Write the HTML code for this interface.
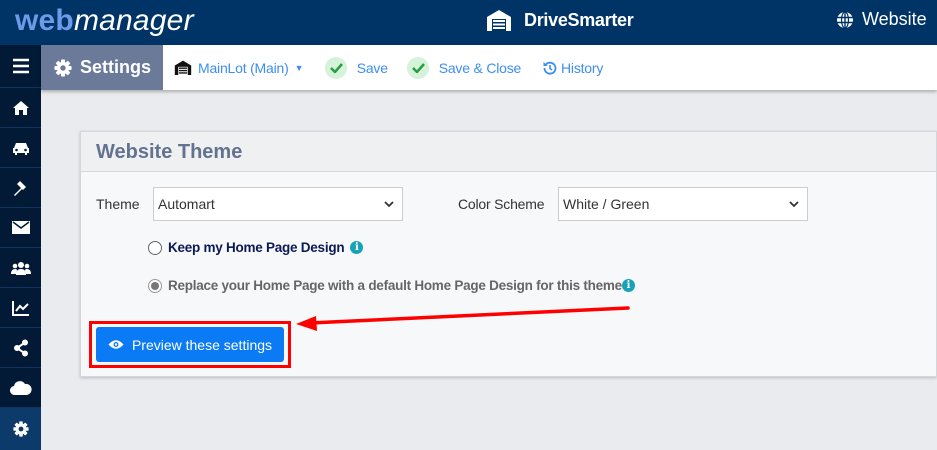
<!DOCTYPE html>
<html><head><style>
*{box-sizing:border-box;margin:0;padding:0}
body{width:937px;height:449px;overflow:hidden;background:#e9ebee;font-family:"Liberation Sans",Arial,sans-serif;position:relative}
.top{position:absolute;left:0;top:0;width:937px;height:45px;background:#003366}
.logo{position:absolute;left:15px;top:4px;font-size:30px;color:#fff;font-style:italic;letter-spacing:0.2px}
.logo b{color:#6e9be8;font-style:normal}
.brand{position:absolute;left:486px;top:9px;color:#fff;font-weight:bold;font-size:18px;display:flex;align-items:center;gap:12px;letter-spacing:-0.3px}
.web{position:absolute;left:836px;top:9px;color:#fff;font-size:18px;display:flex;align-items:center;gap:8px}
.side{position:absolute;left:0;top:45px;width:41px;height:404px;background:#021a35}
.si{height:40px;border-bottom:1px solid #0d335e;display:flex;align-items:center;justify-content:center}
.bar{position:absolute;left:41px;top:45px;width:896px;height:45px;background:#fff;box-shadow:0 2px 3px rgba(0,0,0,.25)}
.tab{position:absolute;left:0;top:0;width:122px;height:45px;background:#6b7a99;color:#fff;font-weight:bold;font-size:18px;display:flex;align-items:center;padding-left:13px;gap:8px}
.ti{position:absolute;top:0;height:45px;display:flex;align-items:center;color:#3d8ef0;font-size:14px;gap:6px;letter-spacing:-0.2px}
.chk{width:22px;height:22px;border-radius:50%;background:#d4f3da;display:flex;align-items:center;justify-content:center}
.panel{position:absolute;left:80px;top:131px;width:857px;height:246px;background:#f7f8fa;border:1px solid #d3d6db;box-shadow:0 1px 3px rgba(0,0,0,.2)}
.ph{height:40px;background:#eef0f2;border-bottom:1px solid #d6d9dd;color:#64728f;font-weight:bold;font-size:20px;padding:9px 15px}
.lbl{position:absolute;font-size:14px;color:#333}
.sel{position:absolute;height:34px;background:#fff;border:1px solid #ccc;font-size:14px;color:#333;padding:8px 4px}
.sel svg{position:absolute;right:8px;top:13px}
.rad{position:absolute;font-size:13.5px;font-weight:bold;display:flex;align-items:center;gap:6px;letter-spacing:-0.25px}
.rc{width:14px;height:14px;border-radius:50%;border:1px solid #666;background:#fff;display:flex;align-items:center;justify-content:center}
.info{width:13px;height:13px;border-radius:50%;background:#17a2b8;color:#fff;font-size:10px;font-weight:bold;display:inline-flex;align-items:center;justify-content:center;font-family:"DejaVu Serif",serif}
.hl{position:absolute;left:89px;top:321px;width:202px;height:47px;border:3px solid #f00}
.btn{position:absolute;left:96px;top:327px;width:188px;height:35px;background:#0a7bf5;border-radius:3px;color:#fff;font-size:14px;display:flex;align-items:center;justify-content:center;gap:8px}
</style></head><body>
<svg width="0" height="0" style="position:absolute"><defs><symbol id="gear" viewBox="-10 -10 20 20"><g><rect x="-2.2" y="-9.5" width="4.4" height="19" rx="0.8"/><rect x="-2.2" y="-9.5" width="4.4" height="19" rx="0.8" transform="rotate(45)"/><rect x="-2.2" y="-9.5" width="4.4" height="19" rx="0.8" transform="rotate(90)"/><rect x="-2.2" y="-9.5" width="4.4" height="19" rx="0.8" transform="rotate(135)"/><circle r="6.8"/></g></symbol></defs></svg>
<div class="top">
<div class="logo"><b>web</b>manager</div>
<div class="brand"><svg width="26" height="22" viewBox="0 0 26 22"><path d="M1 8 L13 1 L25 8 V22 H1Z" fill="#fff"/><rect x="6" y="10" width="14" height="12" fill="#003366"/><rect x="7" y="11" width="12" height="2" fill="#fff"/><rect x="7" y="14.5" width="12" height="2" fill="#fff"/><rect x="7" y="18" width="12" height="2" fill="#fff"/></svg>DriveSmarter</div>
<div class="web"><svg width="18" height="18" viewBox="0 0 18 18"><circle cx="9" cy="9" r="8" fill="#fff"/><path d="M1 6.5H17M1 11.5H17M9 1V17" stroke="#003366" stroke-width="1.4"/><ellipse cx="9" cy="9" rx="3.5" ry="8" fill="none" stroke="#003366" stroke-width="1.2"/></svg>Website</div>
</div>
<div class="side">
<div class="si" style="height:43px"><svg width="18" height="16"><path d="M1 2H17M1 8H17M1 14H17" stroke="#fff" stroke-width="2.5"/></svg></div>
<div class="si"><svg width="18" height="16" viewBox="0 0 18 16"><path d="M9 1L1 8H3V15H7V10H11V15H15V8H17Z" fill="#fff"/></svg></div>
<div class="si"><svg width="18" height="14" viewBox="0 0 18 14"><path d="M4 2H14L16 7H17V12H15V14H13V12H5V14H3V12H1V7H2Z" fill="#fff"/><circle cx="4.5" cy="9" r="1.3" fill="#021a35"/><circle cx="13.5" cy="9" r="1.3" fill="#021a35"/></svg></div>
<div class="si"><svg width="18" height="18" viewBox="0 0 18 18"><path d="M8 2L14 8L11 11L5 5Z M9 9L2 16L3 17L10 10Z" fill="#fff"/></svg></div>
<div class="si"><svg width="18" height="13" viewBox="0 0 18 13"><rect width="18" height="13" fill="#fff"/><path d="M1 1L9 7L17 1" stroke="#021a35" stroke-width="1.5" fill="none"/></svg></div>
<div class="si"><svg width="20" height="14" viewBox="0 0 20 14"><circle cx="10" cy="4" r="3" fill="#fff"/><circle cx="4" cy="5" r="2.3" fill="#fff"/><circle cx="16" cy="5" r="2.3" fill="#fff"/><path d="M5 14Q5 8 10 8Q15 8 15 14Z M0 13Q0 8 4 8Q6 8 6 9L5 13Z M20 13Q20 8 16 8Q14 8 14 9L15 13Z" fill="#fff"/></svg></div>
<div class="si"><svg width="18" height="16" viewBox="0 0 18 16"><path d="M1 1V15H17" stroke="#fff" stroke-width="2" fill="none"/><path d="M4 11L8 6L11 9L16 4" stroke="#fff" stroke-width="2" fill="none"/></svg></div>
<div class="si"><svg width="16" height="18" viewBox="0 0 16 18"><circle cx="12" cy="3.5" r="3" fill="#fff"/><circle cx="4" cy="9" r="3" fill="#fff"/><circle cx="12" cy="14.5" r="3" fill="#fff"/><path d="M12 3.5L4 9L12 14.5" stroke="#fff" stroke-width="2" fill="none"/></svg></div>
<div class="si"><svg width="22" height="15" viewBox="0 0 22 15"><path d="M5 15A4.5 4.5 0 0 1 4 6A6 6 0 0 1 15 4A5 5 0 0 1 17 15Z" fill="#fff"/></svg></div>
<div class="si" style="background:#0c3a6b;border:none;height:42px"><svg width="16" height="16" style="fill:#fff"><use href="#gear"/><circle cx="8" cy="8" r="2.4" fill="#0c3a6b"/></svg></div>
</div>
<div class="bar">
<div class="tab"><svg width="18" height="18" style="fill:#fff"><use href="#gear"/><circle cx="9" cy="9" r="2.7" fill="#6b7a99"/></svg>Settings</div>
<div class="ti" style="left:133px"><svg width="18" height="15" viewBox="0 0 26 22"><path d="M1 8 L13 1 L25 8 V22 H1Z" fill="#111"/><rect x="6" y="10" width="14" height="12" fill="#fff"/><rect x="7" y="11" width="12" height="2" fill="#111"/><rect x="7" y="14.5" width="12" height="2" fill="#111"/><rect x="7" y="18" width="12" height="2" fill="#111"/></svg>MainLot (Main) <span style="font-size:9px">▼</span></div>
<div class="ti" style="left:284px"><span class="chk"><svg width="13" height="11"><path d="M1 6L5 10L12 2" stroke="#2a9d3c" stroke-width="2.5" fill="none"/></svg></span>&nbsp;Save</div>
<div class="ti" style="left:366px"><span class="chk"><svg width="13" height="11"><path d="M1 6L5 10L12 2" stroke="#2a9d3c" stroke-width="2.5" fill="none"/></svg></span>&nbsp;Save &amp; Close</div>
<div class="ti" style="left:502px;gap:4px"><svg width="14" height="14" viewBox="0 0 14 14"><path d="M2.5 4A5.5 5.5 0 1 1 1.5 7" stroke="#3d8ef0" stroke-width="1.8" fill="none"/><path d="M0.5 1V5H4.5Z" fill="#3d8ef0"/><path d="M7 4V7.5L9 9" stroke="#3d8ef0" stroke-width="1.6" fill="none"/></svg>History</div>
</div>
<div class="panel"><div class="ph">Website Theme</div></div>
<div class="lbl" style="left:96px;top:196px">Theme</div>
<div class="sel" style="left:153px;top:187px;width:250px">Automart<svg width="10" height="7"><path d="M1 1L5 5L9 1" stroke="#333" stroke-width="1.8" fill="none"/></svg></div>
<div class="lbl" style="left:458px;top:196px;letter-spacing:-0.2px">Color Scheme</div>
<div class="sel" style="left:558px;top:187px;width:250px">White / Green<svg width="10" height="7"><path d="M1 1L5 5L9 1" stroke="#333" stroke-width="1.8" fill="none"/></svg></div>
<div class="rad" style="left:148px;top:240px;color:#0b1a55"><span class="rc"></span>Keep my Home Page Design <span class="info">i</span></div>
<div class="rad" style="left:148px;top:278px;color:#666"><span class="rc" style="border-color:#999"><span style="width:8px;height:8px;border-radius:50%;background:#777"></span></span>Replace your Home Page with a default Home Page Design for this theme<span class="info" style="margin-left:-6px">i</span></div>
<svg style="position:absolute;left:0;top:0" width="937" height="449"><path d="M628 308L310 323" stroke="#f00" stroke-width="3.5" stroke-linecap="round"/><path d="M296 324L316 316L317 331Z" fill="#f00"/></svg>
<div class="hl"></div>
<div class="btn"><svg width="16" height="11" viewBox="0 0 16 11"><path d="M0.5 5.5Q8 -3 15.5 5.5Q8 14 0.5 5.5Z" fill="#fff"/><circle cx="8" cy="5.5" r="2.5" fill="#0a7bf5"/><circle cx="8" cy="5.5" r="1.2" fill="#fff"/></svg>Preview these settings</div>
</body></html>
